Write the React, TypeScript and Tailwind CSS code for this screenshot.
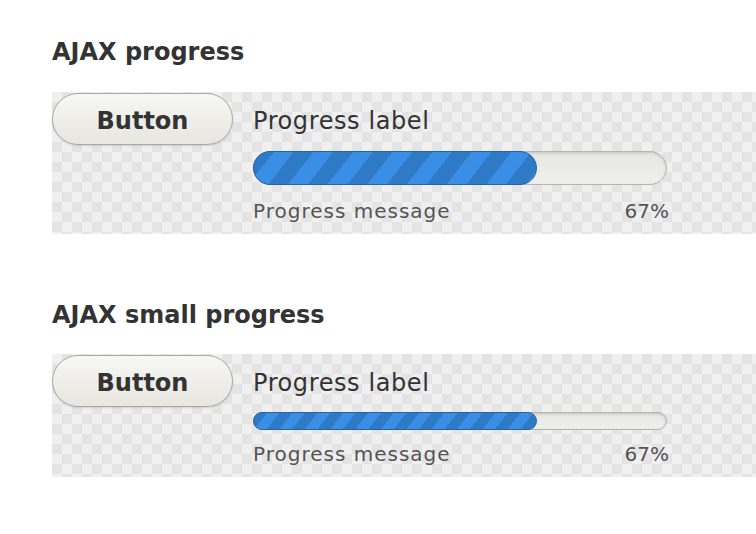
import React from 'react'

const checker =
  'bg-[conic-gradient(#e4e4e4_25%,#f0f0f0_0_50%,#e4e4e4_0_75%,#f0f0f0_0)] bg-[length:20px_20px]'

function Button() {
  return (
    <button className="h-[52px] w-[181px] shrink-0 rounded-full border border-[#a8a8a8] bg-[linear-gradient(#f7f7f4,#e7e6e0)] pt-[3px] text-[24px] font-bold text-[#333] shadow-[0_1px_2px_rgba(0,0,0,0.12)]">
      Button
    </button>
  )
}

function ProgressSection({ small }: { small?: boolean }) {
  return (
    <div className={`flex items-start ${checker} ${small ? 'h-[123px]' : 'h-[142px]'}`}>
      <div className="mt-px">
        <Button />
      </div>
      <div className="ml-[20px] w-[416px]">
        <div className="mt-[15px] text-[24px] leading-[28px] tracking-[0.6px] text-[#333]">Progress label</div>
        <div
          className={`relative w-[414px] rounded-full border border-[#b3b3b3] bg-[linear-gradient(#e6e6e2,#f0f0ee)] shadow-[inset_0_1px_3px_rgba(0,0,0,0.16)] ${
            small ? 'mt-[15px] h-[18px]' : 'mt-[16px] h-[34px]'
          }`}
        >
          <div
            className={`absolute -left-px -top-px -bottom-px w-[69%] rounded-full border border-[#2762a3] ${
              small
                ? 'bg-[repeating-linear-gradient(128deg,#2f7ac6_0_10px,#3a8ee5_10px_20px)]'
                : 'bg-[repeating-linear-gradient(128deg,#2f7ac6_0_15.6px,#3a8ee5_15.6px_31.2px)]'
            }`}
          />
        </div>
        <div
          className={`flex justify-between text-[20px] leading-[24px] tracking-[1px] text-[#555] ${
            small ? 'mt-[12px]' : 'mt-[14px]'
          }`}
        >
          <span>Progress message</span>
          <span className="tracking-normal">67%</span>
        </div>
      </div>
    </div>
  )
}

export default function App() {
  return (
    <div className="min-h-[534px] w-[756px] overflow-hidden bg-white pl-[52px] pt-[38px] font-['DejaVu_Sans',sans-serif]">
      <h2 className="text-[24px] font-bold leading-[28px] text-[#333]">AJAX progress</h2>
      <div className="mt-[26px]">
        <ProgressSection />
      </div>
      <h2 className="mt-[67px] text-[24px] font-bold leading-[28px] text-[#333]">AJAX small progress</h2>
      <div className="mt-[25px]">
        <ProgressSection small />
      </div>
    </div>
  )
}
